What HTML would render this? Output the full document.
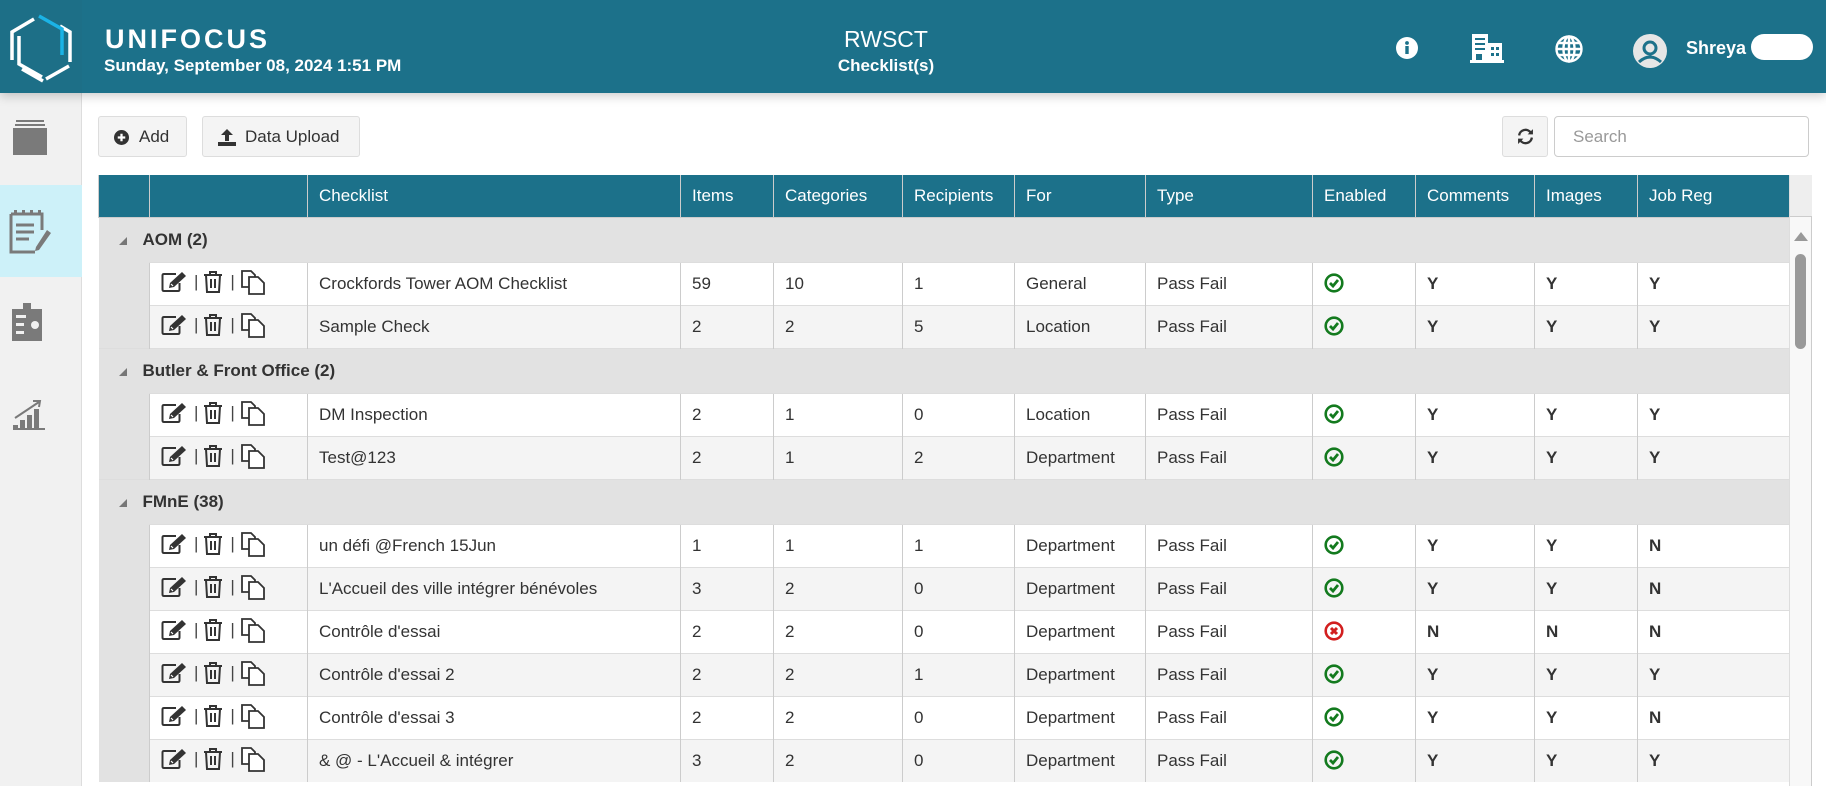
<!DOCTYPE html>
<html><head><meta charset="utf-8"><style>
*{box-sizing:border-box;margin:0;padding:0}
body{width:1826px;height:786px;overflow:hidden;background:#fff;font-family:"Liberation Sans",Arial,sans-serif;color:#333;position:relative}
.hdr{position:absolute;left:0;top:0;width:1826px;height:93px;background:#1c718a;color:#fff;box-shadow:0 3px 10px rgba(0,0,0,.2);z-index:2}
.logo{position:absolute;left:0;top:0;width:82px;height:93px;background:#1d6f87}
.brand{position:absolute;left:105px;top:24px;font-size:27px;font-weight:bold;letter-spacing:3px}
.date{position:absolute;left:104px;top:56px;font-size:17px;font-weight:bold}
.title{position:absolute;left:0;width:1772px;text-align:center;top:26px;font-size:23px}
.sub{position:absolute;left:0;width:1772px;text-align:center;top:56px;font-size:17px;font-weight:bold}
.side{position:absolute;left:0;top:93px;width:82px;height:693px;background:#f1f1f1;border-right:1px solid #ddd}
.act{position:absolute;left:0;top:92px;width:82px;height:92px;background:#cdf1f9}
.btn{position:absolute;top:116px;height:41px;border:1px solid #ddd;border-radius:3px;background:#f4f4f4;font-size:17px;line-height:39px;color:#333}
.search{position:absolute;left:1554px;top:116px;width:255px;height:41px;border:1px solid #ccc;border-radius:4px;font-size:17px;color:#999;line-height:39px;padding-left:18px}
table{position:absolute;left:98px;top:175px;width:1691px;border-collapse:collapse;table-layout:fixed;font-size:17px}
th{background:#1c718a;color:#fff;font-weight:normal;text-align:left;height:42px;padding-left:11px;border:1px solid #ccc;border-top:none}
td{height:43px;padding-left:11px;border-left:1px solid #ccc;border-top:1px solid #ddd;white-space:nowrap}
tr.g td{background:#e2e2e2;height:45px;font-weight:bold;padding-left:44px;position:relative;border-left:none}
tr.g td:before{content:"";position:absolute;left:20px;top:19px;border-left:8px solid transparent;border-bottom:8px solid #777}
td.e{background:#e2e2e2;border:none}
tr.alt td{background:#f4f4f4}
tr.alt td.e{background:#e2e2e2}
td.b{font-weight:bold}
.sb{position:absolute;left:1789px;top:175px;width:23px;height:611px;background:#f8f8f8;border-left:1px solid #ddd;border-right:1px solid #ccc}
.sbh{position:absolute;left:0;top:0;width:22px;height:42px;background:#eee;border-bottom:1px solid #ccc}
.ic{display:inline-flex;align-items:center;gap:0}
.pipe{color:#444;margin:0 5px 0 7px;font-size:17px}
</style></head><body>
<div class="hdr">
 <div class="logo"><svg width="82" height="93" viewBox="0 0 82 93"><g fill="none" stroke="#fff" stroke-width="3.5"><path d="M34 19 L12 32 L12 60"/><path d="M19 36 L19 64 L42 77"/><path d="M46 79 L69 66"/><path d="M70 62 L70 32 L60 26"/><path d="M22 69 L43 81"/></g><path d="M39 16 L62 29 L62 55" fill="none" stroke="#1bb3e6" stroke-width="3.5"/></svg></div>
 <div class="brand">UNIFOCUS</div>
 <div class="date">Sunday, September 08, 2024 1:51 PM</div>
 <div class="title">RWSCT</div>
 <div class="sub">Checklist(s)</div>
 <svg style="position:absolute;left:1396px;top:37px" width="22" height="22" viewBox="0 0 22 22"><circle cx="11" cy="11" r="11" fill="#fff"/><rect x="9.3" y="9" width="3.4" height="8" fill="#1c718a"/><circle cx="11" cy="6" r="1.9" fill="#1c718a"/></svg>
 <svg style="position:absolute;left:1470px;top:34px" width="34" height="29" viewBox="0 0 34 29"><g fill="#fff"><rect x="2" y="0" width="16" height="27"/><rect x="18" y="9" width="14" height="18"/><rect x="0" y="26" width="34" height="3"/></g><g fill="#1c718a"><rect x="5" y="4" width="10" height="2"/><rect x="5" y="9" width="10" height="2"/><rect x="5" y="14" width="10" height="2"/><rect x="6" y="20" width="6" height="6"/><rect x="21" y="13" width="3" height="3"/><rect x="26" y="13" width="3" height="3"/><rect x="21" y="19" width="3" height="3"/><rect x="26" y="19" width="3" height="3"/></g></svg>
 <svg style="position:absolute;left:1555px;top:35px" width="28" height="28" viewBox="0 0 28 28"><g fill="none" stroke="#fff" stroke-width="2.4"><circle cx="14" cy="14" r="12.5"/><ellipse cx="14" cy="14" rx="5.5" ry="12.5"/><line x1="14" y1="1" x2="14" y2="27"/><line x1="1" y1="14" x2="27" y2="14"/><line x1="3" y1="8" x2="25" y2="8"/><line x1="3" y1="20" x2="25" y2="20"/></g></svg>
 <svg style="position:absolute;left:1633px;top:34px" width="34" height="34" viewBox="0 0 34 34"><circle cx="17" cy="17" r="17" fill="#e6e6e6"/><circle cx="17" cy="14" r="6" fill="none" stroke="#1c718a" stroke-width="3"/><path d="M6 28 Q17 18 28 28" fill="none" stroke="#1c718a" stroke-width="3"/></svg>
 <div style="position:absolute;left:1686px;top:38px;font-size:18px;font-weight:bold">Shreya</div>
 <div style="position:absolute;left:1751px;top:34px;width:62px;height:26px;background:#fff;border-radius:13px"></div>
</div>
<div class="side">
 <div class="act"></div>
 <svg style="position:absolute;left:12px;top:27px" width="36" height="36" viewBox="0 0 36 36"><g fill="#7a7a7a"><rect x="1" y="8" width="34" height="27"/><rect x="3" y="4" width="30" height="2"/><rect x="4" y="0" width="28" height="2"/></g></svg>
 <svg style="position:absolute;left:9px;top:117px" width="42" height="44" viewBox="0 0 42 44"><g fill="none" stroke="#7a7a7a" stroke-width="3"><path d="M2 4 H33 V20 M2 4 V42 H26"/><line x1="7" y1="15" x2="25" y2="15"/><line x1="7" y1="22" x2="25" y2="22"/><line x1="7" y1="29" x2="20" y2="29"/></g><g fill="#7a7a7a"><rect x="5" y="0" width="3" height="5"/><rect x="13" y="0" width="3" height="5"/><rect x="21" y="0" width="3" height="5"/><rect x="29" y="0" width="3" height="5"/><path d="M38 20 L42 23 L30 40 L26 41 L27 37 Z"/></g></svg>
 <svg style="position:absolute;left:12px;top:210px" width="32" height="38" viewBox="0 0 32 38"><g fill="#7a7a7a"><rect x="0" y="6" width="30" height="32"/><rect x="11" y="0" width="8" height="8"/></g><g fill="#f1f1f1"><rect x="4" y="12" width="10" height="3"/><rect x="4" y="20" width="8" height="3"/><rect x="4" y="28" width="8" height="3"/><circle cx="23" cy="22" r="4"/></g></svg>
 <svg style="position:absolute;left:13px;top:305px" width="32" height="32" viewBox="0 0 32 32"><g fill="#7a7a7a"><rect x="0" y="27" width="5" height="5"/><rect x="7" y="22" width="5" height="10"/><rect x="14" y="17" width="5" height="15"/><rect x="21" y="11" width="5" height="21"/><rect x="0" y="30" width="32" height="2"/></g><path d="M2 20 L26 4 M20 3 L27 3 L26 9" stroke="#7a7a7a" stroke-width="2" fill="none"/></svg>
</div>
<div class="btn" style="left:98px;width:89px"><svg style="position:absolute;left:15px;top:13px" width="15" height="15" viewBox="0 0 16 16"><circle cx="8" cy="8" r="8" fill="#333"/><path d="M8 4V12M4 8H12" stroke="#fff" stroke-width="2.4"/></svg><span style="position:absolute;left:40px">Add</span></div>
<div class="btn" style="left:202px;width:158px"><svg style="position:absolute;left:15px;top:12px" width="18" height="17" viewBox="0 0 18 17"><path d="M9 0 L15 6 H11 V12 H7 V6 H3 Z" fill="#333"/><rect x="0" y="13" width="18" height="4" fill="#333"/></svg><span style="position:absolute;left:42px">Data Upload</span></div>
<div class="btn" style="left:1502px;width:46px"><svg style="position:absolute;left:14px;top:11px" width="17" height="17" viewBox="0 0 16 16"><path d="M2 7 A6 6 0 0 1 13 4.5" stroke="#333" stroke-width="2.2" fill="none"/><path d="M14 9 A6 6 0 0 1 3 11.5" stroke="#333" stroke-width="2.2" fill="none"/><path d="M15 1V6H10Z M1 15V10H6Z" fill="#333"/></svg></div>
<div class="search">Search</div>
<table>
<colgroup><col style="width:51px"><col style="width:158px"><col style="width:373px"><col style="width:93px"><col style="width:129px"><col style="width:112px"><col style="width:131px"><col style="width:167px"><col style="width:103px"><col style="width:119px"><col style="width:103px"><col style="width:152px"></colgroup>
<tr><th></th><th></th><th>Checklist</th><th>Items</th><th>Categories</th><th>Recipients</th><th>For</th><th>Type</th><th>Enabled</th><th>Comments</th><th>Images</th><th>Job Reg</th></tr>
<tbody id="tb"></tbody>
</table>
<div class="sb"><div class="sbh"></div><div style="position:absolute;left:4px;top:57px;border-left:7px solid transparent;border-right:7px solid transparent;border-bottom:9px solid #999"></div><div style="position:absolute;left:5px;top:79px;width:11px;height:95px;background:#999;border-radius:6px"></div></div>
<script>
var ICO='<span class="ic"><svg width="26" height="22" viewBox="0 0 26 22"><path d="M15 3H3Q1.5 3 1.5 4.5V18.5Q1.5 20 3 20H17Q18.5 20 18.5 18.5V12" fill="none" stroke="#333" stroke-width="2"/><path d="M21 1L25 5L13 16L8 17L9 12Z" fill="#333"/><path d="M10 13L12 15" stroke="#fff" stroke-width="1.2"/></svg><span class="pipe">|</span><svg width="20" height="24" viewBox="0 0 20 24"><g fill="none" stroke="#333" stroke-width="2"><path d="M1 5H19M7 5V2H13V5M3 5L4 22H16L17 5"/><path d="M8 9V18M12 9V18" /></g></svg><span class="pipe">|</span><svg width="26" height="26" viewBox="0 0 26 26"><g fill="#fff" stroke="#333" stroke-width="1.8"><path d="M2 2H11L15 6V18H2Z"/><path d="M9 8H18L24 14V25H9Z"/></g></svg></span>';
var OK='<svg width="20" height="20" viewBox="0 0 20 20"><circle cx="10" cy="10" r="8.3" fill="none" stroke="#137a1e" stroke-width="2.6"/><path d="M6 10L9 13L14 7" fill="none" stroke="#137a1e" stroke-width="2.8"/></svg>';
var NO='<svg width="20" height="20" viewBox="0 0 20 20"><circle cx="10" cy="10" r="8.3" fill="none" stroke="#d21f1f" stroke-width="2.6"/><path d="M7 7L13 13M13 7L7 13" stroke="#d21f1f" stroke-width="3"/></svg>';
var D=[["g","AOM (2)"],["Crockfords Tower AOM Checklist",59,10,1,"General",1,"YYY"],["Sample Check",2,2,5,"Location",1,"YYY"],["g","Butler &amp; Front Office (2)"],["DM Inspection",2,1,0,"Location",1,"YYY"],["Test@123",2,1,2,"Department",1,"YYY"],["g","FMnE (38)"],["un défi @French 15Jun",1,1,1,"Department",1,"YYN"],["L'Accueil des ville intégrer bénévoles",3,2,0,"Department",1,"YYN"],["Contrôle d'essai",2,2,0,"Department",0,"NNN"],["Contrôle d'essai 2",2,2,1,"Department",1,"YYY"],["Contrôle d'essai 3",2,2,0,"Department",1,"YYN"],["&amp; @ - L'Accueil &amp; intégrer",3,2,0,"Department",1,"YYY"]];
var h='',k=0;
D.forEach(function(r){if(r[0]=="g"){h+='<tr class="g"><td colspan="12">'+r[1]+'</td></tr>';k=0;return;}
h+='<tr'+(k%2?' class="alt"':'')+'><td class="e"></td><td>'+ICO+'</td><td>'+r[0]+'</td><td>'+r[1]+'</td><td>'+r[2]+'</td><td>'+r[3]+'</td><td>'+r[4]+'</td><td>Pass Fail</td><td style="padding-top:4px">'+(r[5]?OK:NO)+'</td><td class="b">'+r[6][0]+'</td><td class="b">'+r[6][1]+'</td><td class="b">'+r[6][2]+'</td></tr>';k++;});
document.getElementById('tb').innerHTML=h;
</script>
</body></html>
